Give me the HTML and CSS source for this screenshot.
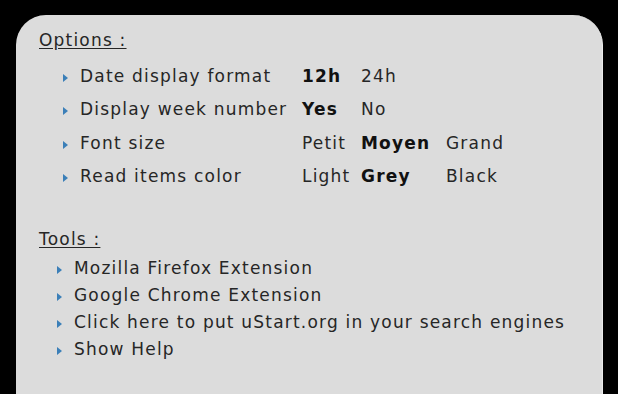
FILE: index.html
```html
<!DOCTYPE html>
<html>
<head>
<meta charset="utf-8">
<link rel="stylesheet" href="styles.css">
</head>
<body>
<div class="panel">
  <h2 class="heading">Options :</h2>
  <table class="options">
    <tr>
      <td class="label"><span class="bullet"></span>Date display format</td>
      <td class="v1 sel">12h</td>
      <td class="v2">24h</td>
      <td class="v3"></td>
    </tr>
    <tr>
      <td class="label"><span class="bullet"></span>Display week number</td>
      <td class="v1 sel">Yes</td>
      <td class="v2">No</td>
      <td class="v3"></td>
    </tr>
    <tr>
      <td class="label"><span class="bullet"></span>Font size</td>
      <td class="v1">Petit</td>
      <td class="v2 sel">Moyen</td>
      <td class="v3">Grand</td>
    </tr>
    <tr>
      <td class="label"><span class="bullet"></span>Read items color</td>
      <td class="v1">Light</td>
      <td class="v2 sel">Grey</td>
      <td class="v3">Black</td>
    </tr>
  </table>
  <h2 class="heading tools-heading">Tools :</h2>
  <ul class="tools">
    <li><span class="bullet"></span>Mozilla Firefox Extension</li>
    <li><span class="bullet"></span>Google Chrome Extension</li>
    <li><span class="bullet"></span>Click here to put uStart.org in your search engines</li>
    <li><span class="bullet"></span>Show Help</li>
  </ul>
</div>
</body>
</html>
```

FILE: styles.css
```css
html, body {
  margin: 0;
  padding: 0;
  background: #000;
}
body {
  width: 618px;
  height: 394px;
  overflow: hidden;
  font-family: "DejaVu Sans", Verdana, sans-serif;
  font-size: 17px;
  letter-spacing: 1.2px;
  color: #262626;
}
.panel {
  margin: 15px 0 0 16px;
  width: 587px;
  height: 400px;
  background: #dcdcdc;
  border-right: 1px solid #ececec;
  border-radius: 30px 30px 0 0;
  padding: 14px 0 0 23px;
  box-sizing: border-box;
}
.heading {
  margin: 0;
  font-size: 17px;
  font-weight: normal;
  line-height: 22px;
  text-decoration: underline;
  text-underline-offset: 2px;
}
.options {
  border-collapse: collapse;
  margin: 8px 0 0 24px;
}
.options td {
  padding: 0;
  height: 33.5px;
  vertical-align: middle;
  white-space: nowrap;
}
.options .label {
  width: 239px;
}
.options .v1 { width: 59px; }
.options .v2 { width: 85px; }
.sel {
  font-weight: bold;
  color: #111;
}
.bullet {
  display: inline-block;
  width: 0;
  height: 0;
  border-top: 4px solid transparent;
  border-bottom: 4px solid transparent;
  border-left: 5px solid #3b7fb8;
  margin-right: 12px;
  vertical-align: 0;
}
.tools-heading {
  margin-top: 35px;
}
.tools {
  list-style: none;
  margin: 5px 0 0 18px;
  padding: 0;
}
.tools li {
  line-height: 27px;
  white-space: nowrap;
}
.tools .bullet {
  margin-right: 12px;
}
```
